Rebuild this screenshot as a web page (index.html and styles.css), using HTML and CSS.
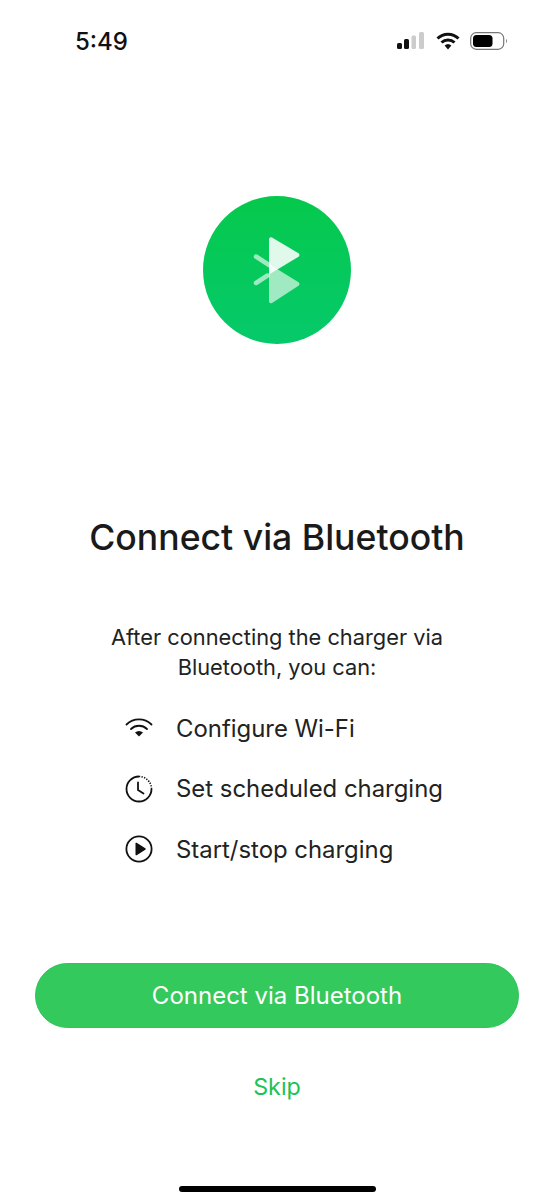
FILE: index.html
```html
<!DOCTYPE html>
<html lang="en">
<head>
    <meta charset="UTF-8">
    <meta name="viewport" content="width=device-width, initial-scale=1.0">
    <title>Connect via Bluetooth</title>
    <link rel="stylesheet" href="styles.css">
</head>
<body>
    <div class="screen">
        <div class="status-bar">
            <div class="time">5:49</div>
            <div class="status-icons">
                <svg class="signal" width="28" height="18" viewBox="0 0 28 18">
                    <rect x="0" y="11" width="5" height="6" rx="1.5" fill="#111"/>
                    <rect x="7" y="7" width="5" height="10" rx="1.5" fill="#111"/>
                    <rect x="14.5" y="3.5" width="4.5" height="13.5" rx="1.5" fill="#ccc"/>
                    <rect x="22" y="0" width="5" height="17" rx="1.5" fill="#ccc"/>
                </svg>
                <svg class="wifi" width="24" height="18" viewBox="0 0 24 18">
                    <path d="M1.5 6.5a15 15 0 0 1 21 0M5.5 10.5a9.5 9.5 0 0 1 13 0" fill="none" stroke="#111" stroke-width="3"/>
                    <path d="M8.6 13.5a5 5 0 0 1 6.8 0L12 17.5z" fill="#111"/>
                </svg>
                <svg class="battery" width="38" height="18" viewBox="0 0 38 18">
                    <rect x="0.7" y="0.7" width="33" height="16.6" rx="5.5" fill="none" stroke="#777" stroke-width="1.2"/>
                    <rect x="3" y="3" width="19.5" height="12" rx="3.5" fill="#000"/>
                    <path d="M36 7v4a2 2 0 0 0 1-2 2 2 0 0 0-1-2z" fill="#888"/>
                </svg>
            </div>
        </div>

        <div class="logo">
            <svg width="148" height="148" viewBox="0 0 148 148">
                <path d="M66 43v35.500L95.500 60.700a2 2 0 0 0 0-3.400L69 41.500a2 2 0 0 0-3 1.500z" fill="#fff" fill-opacity="0.88"/>
                <path d="M66 68v37.500a2 2 0 0 0 3 1.500l26.500-17.300a2 2 0 0 0 0-3.400L66 68z" fill="#fff" fill-opacity="0.62"/>
                <path d="M53 60.500l13 8.500M53 87l11.500-7.500" stroke="#fff" stroke-opacity="0.62" stroke-width="4.500" stroke-linecap="round" fill="none"/>
            </svg>
        </div>

        <h1 class="title">Connect via Bluetooth</h1>

        <p class="intro">After connecting the charger via<br>Bluetooth, you can:</p>

        <div class="features">
            <div class="feature">
                <svg width="28" height="28" viewBox="0 0 28 28">
                    <path d="M1.5 10.5a18 18 0 0 1 25 0M6 15a11.5 11.5 0 0 1 16 0" fill="none" stroke="#111" stroke-width="1.8" stroke-linecap="round"/>
                    <path d="M10 18.5a6 6 0 0 1 8 0L14 22.5z" fill="#111"/>
                </svg>
                <span>Configure Wi-Fi</span>
            </div>
            <div class="feature">
                <svg width="28" height="28" viewBox="0 0 28 28">
                    <path d="M14 1.5A12.5 12.5 0 1 0 26.5 14" fill="none" stroke="#111" stroke-width="1.8"/>
                    <path d="M14 1.5A12.5 12.5 0 0 1 26.5 14" fill="none" stroke="#111" stroke-width="1.6" stroke-dasharray="1.3 1.3"/>
                    <path d="M13 7.5V15l5.5 3.5" fill="none" stroke="#111" stroke-width="1.8" stroke-linecap="round" stroke-linejoin="round"/>
                </svg>
                <span>Set scheduled charging</span>
            </div>
            <div class="feature">
                <svg width="28" height="28" viewBox="0 0 28 28">
                    <circle cx="14" cy="14" r="12.6" fill="none" stroke="#111" stroke-width="1.8"/>
                    <path d="M10.5 8.500v11a.8.8 0 0 0 1.2.7l8.600-5.500a.8.8 0 0 0 0-1.400l-8.600-5.500a.8.8 0 0 0-1.200.7z" fill="#111"/>
                </svg>
                <span>Start/stop charging</span>
            </div>
        </div>

        <button class="connect-btn">Connect via Bluetooth</button>
        <div class="skip">Skip</div>
        <div class="home-bar"></div>
    </div>
</body>
</html>
```

FILE: styles.css
```css
body {
    margin: 0;
    background: #fff;
    font-family: Inter, "Noto Sans", sans-serif;
    color: #1a1a1a;
}

.screen {
    width: 554px;
    height: 1200px;
    overflow: hidden;
    display: flex;
    flex-direction: column;
    align-items: center;
}

.status-bar {
    width: 100%;
    box-sizing: border-box;
    height: 82px;
    padding: 27px 46px 0 75px;
    display: flex;
    justify-content: space-between;
    align-items: flex-start;
}

.time {
    font-size: 24px;
    font-weight: 500;
    line-height: 30px;
    color: #111;
}

.status-icons {
    display: flex;
    align-items: center;
    gap: 10px;
    padding-top: 5px;
}

.signal {
    margin-right: 1px;
}

.logo {
    width: 148px;
    height: 148px;
    margin-top: 114px;
    border-radius: 50%;
    background: linear-gradient(180deg, #05c94c 0%, #06c96b 100%);
}

.title {
    margin: 171px 0 0;
    font-size: 35.6px;
    line-height: 46px;
    font-weight: 500;
}

.intro {
    margin: 61px 0 0;
    font-size: 21.8px;
    line-height: 30px;
    text-align: center;
    color: #222;
}

.features {
    align-self: flex-start;
    margin: 26px 0 0 125px;
    display: flex;
    flex-direction: column;
    gap: 20px;
}

.feature {
    display: flex;
    align-items: center;
    gap: 23px;
    height: 40.5px;
    font-size: 23.9px;
    color: #222;
}

.connect-btn {
    margin-top: 93px;
    width: 484px;
    height: 65px;
    flex: none;
    border: 1px solid #2ec45a;
    border-radius: 33px;
    background: #33c95d;
    color: #fff;
    font-family: inherit;
    font-size: 24px;
}

.skip {
    margin-top: 44px;
    font-size: 23.3px;
    line-height: 30px;
    color: #1fc254;
}

.home-bar {
    margin-top: 84px;
    width: 197px;
    height: 6px;
    flex: none;
    border-radius: 3px;
    background: #000;
}
```
